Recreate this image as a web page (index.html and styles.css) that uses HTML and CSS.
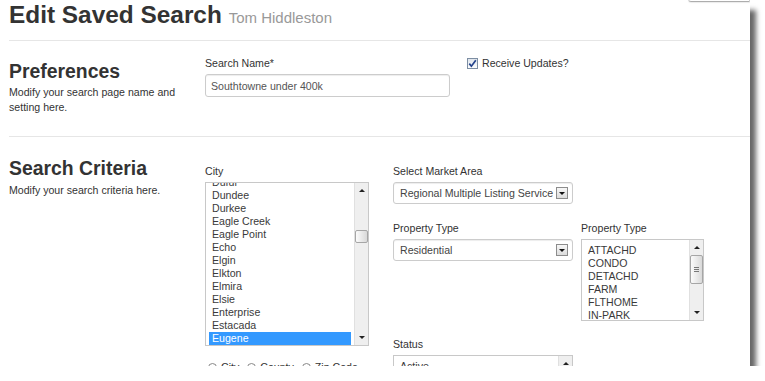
FILE: index.html
```html
<!DOCTYPE html>
<html lang="en">
<head>
  <meta charset="UTF-8" />
  <title>Edit Saved Search</title>
  <meta name="viewport" content="width=device-width, initial-scale=1.0" />
  <link rel="stylesheet" href="styles.css">
</head>
<body>

  <div class="page">

    <div class="page-header">
      <h1>Edit Saved Search <small>Tom Hiddleston</small></h1>
      <div class="top-btn"></div>
    </div>

    <div class="section prefs">
      <div class="intro">
        <h3>Preferences</h3>
        <p>Modify your search page name and setting here.</p>
      </div>
      <div class="fields">
        <div class="field name-field">
          <label for="searchName">Search Name*</label>
          <input type="text" id="searchName" class="text-input" value="Southtowne under 400k">
        </div>
        <div class="field">
          <div class="check">
            <span class="checkbox">
              <svg width="9" height="9" viewBox="0 0 9 9"><path d="M1.3 4.6 L3.4 7.2 L7.8 1.3" fill="none" stroke="#22428c" stroke-width="1.7"/></svg>
            </span>
            Receive Updates?
          </div>
        </div>
      </div>
    </div>

    <div class="section criteria">
      <div class="intro">
        <h3>Search Criteria</h3>
        <p>Modify your search criteria here.</p>
      </div>
      <div class="fields">
        <div class="field city-col">
          <label>City</label>
          <div class="listbox city-list">
            <ul class="opts">
              <li>Dufur</li>
              <li>Dundee</li>
              <li>Durkee</li>
              <li>Eagle Creek</li>
              <li>Eagle Point</li>
              <li>Echo</li>
              <li>Elgin</li>
              <li>Elkton</li>
              <li>Elmira</li>
              <li>Elsie</li>
              <li>Enterprise</li>
              <li>Estacada</li>
              <li class="sel">Eugene</li>
            </ul>
            <div class="scrollbar">
              <span class="arrow up"></span>
              <span class="track"><span class="thumb city-thumb"></span></span>
              <span class="arrow down"></span>
            </div>
          </div>
          <div class="radios">
            <span class="radio"></span>City
            <span class="radio"></span>County
            <span class="radio"></span>Zip Code
          </div>
        </div>

        <div class="criteria-right">
          <div class="field row-first">
            <label>Select Market Area</label>
            <div class="select">
              <span class="val">Regional Multiple Listing Service</span>
              <span class="drop"></span>
            </div>
          </div>

          <div class="field-row">
            <div class="field col-field">
              <label>Property Type</label>
              <div class="select">
                <span class="val">Residential</span>
                <span class="drop"></span>
              </div>
            </div>
            <div class="field">
              <label>Property Type</label>
              <div class="listbox type-list">
                <ul class="opts">
                  <li>ATTACHD</li>
                  <li>CONDO</li>
                  <li>DETACHD</li>
                  <li>FARM</li>
                  <li>FLTHOME</li>
                  <li>IN-PARK</li>
                  <li>MANUF</li>
                </ul>
                <div class="scrollbar">
                  <span class="arrow up"></span>
                  <span class="track"><span class="thumb grip"></span></span>
                  <span class="arrow down"></span>
                </div>
              </div>
            </div>
          </div>

          <div class="field">
            <label>Status</label>
            <div class="listbox status-list">
              <ul class="opts">
                <li>Active</li>
                <li>Pending</li>
              </ul>
              <div class="scrollbar">
                <span class="arrow up"></span>
                <span class="track"></span>
              </div>
            </div>
          </div>
        </div>
      </div>
    </div>

  </div>

</body>
</html>
```

FILE: styles.css
```css
body {
  margin: 0;
  background: #fff;
  font-family: "Liberation Sans", Arial, sans-serif;
  font-size: 10.6px;
  color: #333;
}

.page {
  width: 750px;
  height: 366px;
  box-sizing: border-box;
  padding-left: 9px;
  overflow: hidden;
  background: #fff;
  box-shadow: 8px 8px 5px -2px rgba(0, 0, 0, 0.6);
}

/* header */

.page-header {
  display: flex;
  align-items: flex-start;
  height: 41px;
  box-sizing: border-box;
  padding-top: 1px;
  border-bottom: 1px solid #e6e6e6;
}

h1 {
  margin: 0;
  font-size: 24.4px;
  line-height: 28px;
  font-weight: bold;
  white-space: nowrap;
}

h1 small {
  font-size: 15px;
  font-weight: normal;
  color: #999;
}

.top-btn {
  margin-left: auto;
  margin-top: -29px;
  width: 62px;
  height: 30px;
  box-sizing: border-box;
  border: 1px solid #ccc;
  border-bottom-color: #adadad;
  border-radius: 3px 0 0 3px;
  box-shadow: 0 1px 1px rgba(0, 0, 0, 0.08);
}

/* sections */

.section {
  display: flex;
  box-sizing: border-box;
  border-bottom: 1px solid #e6e6e6;
}

.prefs {
  height: 96px;
}

.criteria {
  border-bottom: none;
}

.intro {
  width: 196px;
  flex-shrink: 0;
  box-sizing: border-box;
  padding-right: 14px;
}

.prefs .intro {
  padding-top: 19px;
}

.criteria .intro {
  padding-top: 20px;
}

h3 {
  margin: 0;
  font-size: 19.4px;
  line-height: 22px;
  font-weight: bold;
}

.intro p {
  margin: 4px 0 0;
  line-height: 15px;
}

.prefs .intro p {
  margin-top: 3px;
}

.fields {
  display: flex;
}

.prefs .fields {
  padding-top: 15px;
}

.criteria .fields {
  padding-top: 27px;
}

.field label {
  display: block;
  line-height: 14px;
  margin-bottom: 4px;
}

.name-field {
  margin-right: 17px;
}

.text-input {
  display: block;
  width: 245px;
  height: 23px;
  box-sizing: border-box;
  margin: 0;
  padding: 0 5px;
  border: 1px solid #ccc;
  border-radius: 3px;
  font: inherit;
  color: #555;
  box-shadow: inset 0 1px 1px rgba(0, 0, 0, 0.075);
}

.check {
  display: flex;
  align-items: center;
  gap: 4px;
  line-height: 14px;
}

.checkbox {
  display: flex;
  align-items: center;
  justify-content: center;
  width: 11px;
  height: 11px;
  box-sizing: border-box;
  border: 1px solid #7d8ea3;
  background: linear-gradient(#dfe5ec, #fbfcfd);
}

/* select boxes */

.select {
  display: flex;
  align-items: center;
  width: 180px;
  height: 22px;
  box-sizing: border-box;
  padding: 0 4px 0 6px;
  border: 1px solid #ccc;
  border-radius: 3px;
  color: #444;
  box-shadow: inset 0 1px 1px rgba(0, 0, 0, 0.075);
}

.select .val {
  flex: 1;
  overflow: hidden;
  white-space: nowrap;
}

.drop {
  display: flex;
  align-items: center;
  justify-content: center;
  width: 12px;
  height: 12px;
  box-sizing: border-box;
  border: 1px solid #8c8c8c;
  background: linear-gradient(#f7f7f7, #dcdcdc);
}

.drop::after {
  content: "";
  border-left: 3px solid transparent;
  border-right: 3px solid transparent;
  border-top: 3px solid #111;
}

/* list boxes */

.listbox {
  display: flex;
  box-sizing: border-box;
  border: 1px solid #c8c8c8;
  background: #fff;
  color: #3a3a3a;
}

.opts {
  flex: 1;
  margin: 0;
  padding: 0 3px;
  list-style: none;
  overflow: hidden;
  line-height: 13px;
}

.opts li {
  padding-left: 3px;
  white-space: nowrap;
}

.opts li.sel {
  background: #3399ff;
  color: #fff;
}

.city-col {
  width: 188px;
  flex-shrink: 0;
}

.city-list {
  width: 164px;
  height: 164px;
}

.city-list .opts li:first-child {
  margin-top: -7px;
}

.type-list {
  width: 123px;
  height: 82px;
}

.type-list .opts,
.status-list .opts {
  padding-top: 4px;
}

.status-list {
  width: 180px;
  height: 40px;
}

.scrollbar {
  display: flex;
  flex-direction: column;
  width: 14px;
  box-sizing: border-box;
  border-left: 1px solid #e0e0e0;
  background: #efefef;
}

.arrow {
  display: flex;
  align-items: center;
  justify-content: center;
  height: 15px;
  flex-shrink: 0;
}

.arrow.up::after {
  content: "";
  border-left: 3px solid transparent;
  border-right: 3px solid transparent;
  border-bottom: 3px solid #222;
}

.arrow.down::after {
  content: "";
  border-left: 3px solid transparent;
  border-right: 3px solid transparent;
  border-top: 3px solid #222;
}

.track {
  flex: 1;
}

.thumb {
  display: block;
  box-sizing: border-box;
  border: 1px solid #a6a6a6;
  border-radius: 2px;
  background: linear-gradient(to right, #fbfbfb, #d9d9d9);
}

.city-thumb {
  height: 13px;
  margin-top: 32px;
}

.grip {
  height: 29px;
}

.grip::after {
  content: "";
  display: block;
  width: 5px;
  height: 5px;
  margin: 11px auto 0;
  background: repeating-linear-gradient(#777 0 1px, transparent 1px 2px);
}

.radios {
  display: flex;
  align-items: center;
  margin-top: 14px;
  padding-left: 3px;
  line-height: 14px;
}

.radio {
  width: 9px;
  height: 9px;
  box-sizing: border-box;
  border: 1px solid #888;
  border-radius: 50%;
  margin: 0 4px 0 0;
}

.radios .radio:not(:first-child) {
  margin-left: 8px;
}

/* right side of search criteria */

.criteria-right {
  display: flex;
  flex-direction: column;
}

.row-first {
  margin-bottom: 17px;
}

.field-row {
  display: flex;
  margin-bottom: 16px;
}

.col-field {
  width: 188px;
}
```
